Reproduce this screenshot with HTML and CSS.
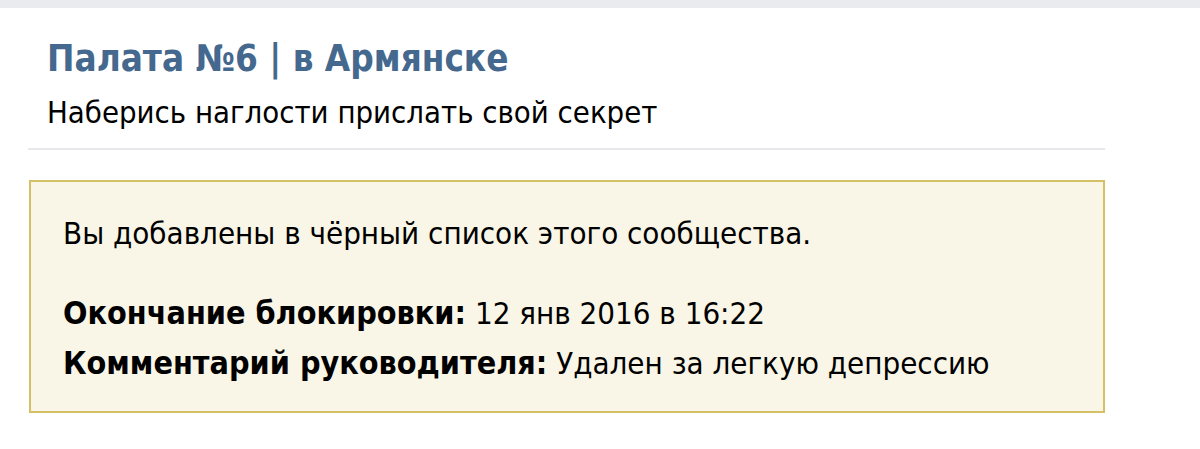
FILE: index.html
```html
<!DOCTYPE html>
<html lang="ru">
<head>
<meta charset="utf-8">
<link rel="stylesheet" href="styles.css">
</head>
<body>
<div class="topbar"></div>
<main class="page">
  <header class="group-head">
    <h1 class="group-title">Палата №6 | в Армянске</h1>
    <div class="group-status">Наберись наглости прислать свой секрет</div>
  </header>
  <section class="notice">
    <p class="notice-msg">Вы добавлены в чёрный список этого сообщества.</p>
    <div class="notice-row"><b>Окончание блокировки:</b> 12 янв 2016 в 16:22</div>
    <div class="notice-row"><b>Комментарий руководителя:</b> Удален за легкую депрессию</div>
  </section>
</main>
</body>
</html>
```

FILE: styles.css
```css
html, body {
  margin: 0;
  padding: 0;
  background: #ffffff;
}
body {
  font-family: "DejaVu Sans Condensed", "DejaVu Sans", sans-serif;
  font-stretch: condensed;
  color: #000;
  width: 1200px;
  height: 449px;
  overflow: hidden;
}
.topbar {
  height: 8px;
  background: #e9ebee;
}
.page {
  margin-left: 28px;
  width: 1077px;
}
.group-head {
  padding: 31px 0 0 19px;
  border-bottom: 2px solid #e7e8ec;
  box-sizing: border-box;
  height: 142px;
}
.group-title {
  margin: 0;
  font-size: 36.5px;
  font-weight: bold;
  color: #45688e;
  line-height: 40px;
}
.group-status {
  font-size: 30.8px;
  line-height: 40px;
  margin-top: 13px;
}
.notice {
  margin-top: 30px;
  margin-left: 1px;
  width: 1076px;
  box-sizing: border-box;
  height: 233px;
  border: 2px solid #d6c066;
  background: #f9f6e7;
  padding: 33px 32px 0;
  font-size: 31px;
}
.notice-msg {
  margin: 0 0 37px;
  line-height: 36px;
}
.notice-row {
  line-height: 50px;
}
.notice-row b {
  font-weight: bold;
  font-size: 32px;
}
```
